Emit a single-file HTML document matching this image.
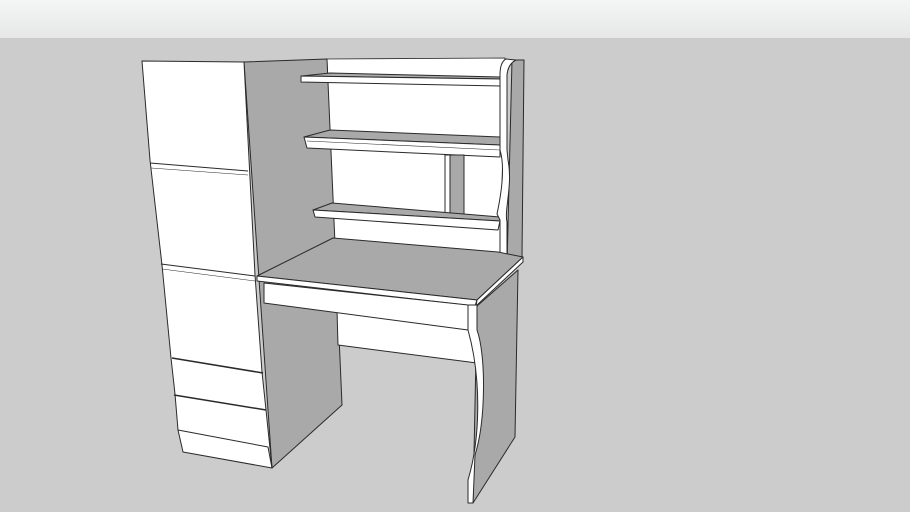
<!DOCTYPE html>
<html><head><style>
html,body{margin:0;padding:0;width:910px;height:512px;overflow:hidden;background:#cccccc;}
svg{display:block}
</style></head><body>
<svg width="910" height="512" viewBox="0 0 910 512">
<defs><linearGradient id="sky" x1="0" y1="0" x2="0" y2="1"><stop offset="0" stop-color="#f4f5f5"/><stop offset="1" stop-color="#e6e7e7"/></linearGradient></defs>
<rect x="0" y="0" width="910" height="38" fill="url(#sky)"/>
<rect x="0" y="38" width="910" height="474" fill="#cccccc"/>
<g stroke="#2a2a2a" stroke-width="1" stroke-linejoin="round">
<polygon points="327,59 505,58 500,268 333,238" fill="#ffffff" stroke-width="0.8"/>
<polygon points="244,62 327,59 342,405 272,468" fill="#a9a9a9"/>
<polygon points="142,61 244,62 255,275 262,372 266,410 272,468 183,452 178,430 175,394 171,358 162,265 150,160" fill="#ffffff"/>
<line x1="150" y1="163" x2="248" y2="171"/>
<line x1="151" y1="168" x2="248" y2="175" stroke-width="0.6"/>
<line x1="161" y1="264" x2="255" y2="276"/>
<line x1="162" y1="269" x2="255" y2="281" stroke-width="0.6"/>
<line x1="172" y1="358" x2="263" y2="373" stroke-width="1.5"/>
<line x1="174" y1="395" x2="266" y2="410" stroke-width="1.5"/>
<polyline points="178,430 268,447 272,468" fill="none"/>
<polygon points="302,76 330,73 501,77 501,79" fill="#a9a9a9"/>
<polygon points="301,76 501,79 501,86 301,82" fill="#ffffff"/>
<polygon points="304,137 330,130 500,137 500,145" fill="#a9a9a9"/>
<polygon points="304,137 500,145 500,157 307,148" fill="#ffffff"/>
<line x1="307" y1="141" x2="500" y2="150" stroke-width="0.6"/>
<polygon points="445,155 464,155 464,222 445,222" fill="#a9a9a9"/>
<polygon points="445,155 450,155 450,221 445,221" fill="#ffffff"/>
<polygon points="313,210 332,203 500,217 500,221" fill="#a9a9a9"/>
<polygon points="313,210 500,221 498,230 315,217" fill="#ffffff"/>
<polygon points="512,60 524,60 522,257 507,266" fill="#a9a9a9"/>
<path d="M506,59 Q500,62 500,75 L500,150 C506,170 500,200 497,214 L500,220 L500,268 L507,266 L507,222 C504,210 513,185 508,160 L507,150 L507,75 Q508,64 516,60 Z" fill="#ffffff"/>
<polygon points="337,310 470,312 477,363 338,345" fill="#ffffff"/>
<polygon points="333,238 498,252 523,257 477,300 257,276" fill="#a9a9a9"/>
<polygon points="257,276 477,300 475,306 257,281" fill="#ffffff"/>
<polygon points="477,300 523,257 523,262 476,306" fill="#ffffff"/>
<polygon points="264,283 468,305 468,330 264,303" fill="#ffffff"/>
<polygon points="477,306 518,270 515,437 473,503" fill="#a9a9a9"/>
<path d="M468,305 L477,305 L477,330 C486,355 486,420 475,455 L473,503 L468,503 L468,480 C480,440 482,380 468,330 Z" fill="#ffffff"/>
</g>
</svg>
</body></html>
